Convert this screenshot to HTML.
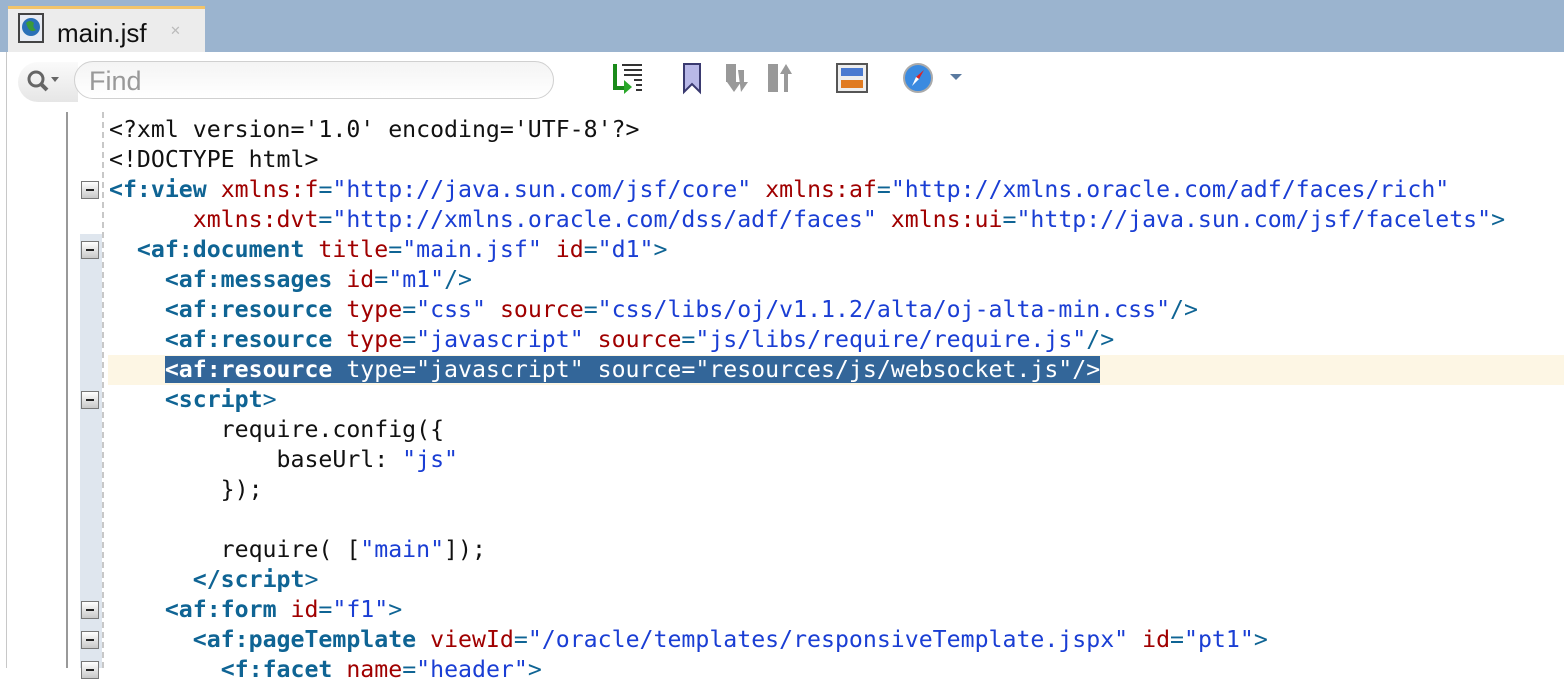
<!DOCTYPE html>
<html><head><style>
body{margin:0;width:1564px;height:668px;overflow:hidden;background:#fff;position:relative;font-family:"Liberation Sans",sans-serif}
.top{position:absolute;left:0;top:0;width:1564px;height:52px;background:#9bb4cf}
.tab{position:absolute;left:8px;top:6px;width:197px;height:46px;background:#ececec;border-top:3px solid #f2c46a;box-sizing:border-box}
.tab .nm{position:absolute;left:49px;top:9px;font-size:26px;color:#111}
.tab .x{position:absolute;left:162px;top:14px;color:#bbb;font-size:13px}
.main{position:absolute;left:6px;top:52px;width:1558px;height:616px;background:#fff;border-left:1px solid #c8c8c8}
.find{position:absolute;left:74px;top:61px;width:480px;height:38px;border:1px solid #d0d0d0;border-radius:20px;background:linear-gradient(#f4f4f4,#fff);box-sizing:border-box}
.find span{position:absolute;left:14px;top:4px;font-size:27px;color:#999}
.srch{position:absolute;left:18px;top:62px;width:60px;height:40px;border-radius:20px 0 0 20px;background:linear-gradient(#fafafa,#e6e6e6)}
.gline{position:absolute;left:66px;top:112px;width:2px;height:556px;background:#999}
.gband{position:absolute;left:80px;top:234px;width:22px;height:434px;background:#dfe6ee}
.dash{position:absolute;left:102px;top:112px;height:556px;border-left:2px dashed #c8c8c8}
.code{position:absolute;left:109px;top:115px;font-family:"DejaVu Sans Mono","Liberation Mono",monospace;font-size:23.2px;line-height:30px;white-space:pre;color:#111}
.l{height:30px}
.t{color:#0f6494;font-weight:bold}.tn{color:#0f6494}
.a{color:#a00000}.v{color:#1a3ed4}
.cur{position:absolute;left:108px;top:355px;width:1456px;height:30px;background:#fdf6e4}
.sel{background:#336699;color:#fff}
.sel *{color:#fff!important}
.fold{position:absolute;left:81px;width:18px;height:18px;border:1px solid #777;background:linear-gradient(#fff,#c8c8c8);box-sizing:border-box}
.fold:after{content:"";position:absolute;left:4px;top:7px;width:8px;height:2px;background:#222}
</style></head><body>
<div class="top"></div>
<div class="tab"><svg style="position:absolute;left:10px;top:4px" width="26" height="30"><rect x="1" y="1" width="24" height="28" fill="#e8ecf4" stroke="#444" stroke-width="2"/><circle cx="13" cy="14" r="9" fill="#2a70b8"/><path d="M8 10 q4-4 8 0 q-2 4 2 7 q-5 3-8-2z" fill="#3a9a3a"/></svg><span class="nm">main.jsf</span><span class="x">✕</span></div>
<div class="main"></div>
<div class="srch"><svg width="60" height="40"><circle cx="18" cy="17" r="7" fill="none" stroke="#666" stroke-width="3"/><line x1="23" y1="22" x2="29" y2="28" stroke="#666" stroke-width="4"/><path d="M33 15 l8 0 l-4 5z" fill="#666"/></svg></div>
<div class="find"><span>Find</span></div>
<svg style="position:absolute;left:612px;top:62px" width="360" height="34">
<path d="M3 2 v24 h12" fill="none" stroke="#1a8a1a" stroke-width="4"/><path d="M12 18 l8 7 l-8 7z" fill="#2aa82a"/><g fill="#333"><rect x="10" y="2" width="20" height="2"/><rect x="12" y="7" width="18" height="2"/><rect x="12" y="12" width="18" height="2"/><rect x="22" y="17" width="8" height="2"/><rect x="24" y="22" width="6" height="2"/><rect x="24" y="27" width="6" height="2"/></g>
<path d="M72 2 h16 v28 l-8-8 l-8 8z" fill="#b8b8e8" stroke="#3a3a70" stroke-width="2"/>
<path d="M114 2 h10 v18 h5 l-7 10 l-7-10 h-1z M126 8 h6 v12 h4 l-7 10z" fill="#999"/>
<path d="M156 2 h10 v28 h-10z M168 12 l6-10 l6 10 h-4 v18 h-4 v-18z" fill="#999"/>
<rect x="225" y="2" width="30" height="28" fill="#eee" stroke="#555" stroke-width="2"/><rect x="229" y="6" width="22" height="8" fill="#4a7ad0"/><rect x="229" y="18" width="22" height="8" fill="#e07a20"/>
<circle cx="306" cy="16" r="14" fill="#3a8ae0" stroke="#aaa" stroke-width="2"/><path d="M312 8 l-5 9 l-3-2z" fill="#e02020"/><path d="M300 24 l4-9 l3 2z" fill="#fff"/>
<path d="M338 12 h12 l-6 6z" fill="#5a7aa0"/>
</svg>
<div class="gline"></div>
<div class="gband"></div>
<div class="dash"></div>
<div class="cur"></div>
<div class="fold" style="top:181px"></div>
<div class="fold" style="top:241px"></div>
<div class="fold" style="top:391px"></div>
<div class="fold" style="top:601px"></div>
<div class="fold" style="top:631px"></div>
<div class="fold" style="top:661px"></div>
<div class="code"><div class="l">&lt;?xml version='1.0' encoding='UTF-8'?&gt;</div><div class="l">&lt;!DOCTYPE html&gt;</div><div class="l"><span class="t">&lt;f:view</span> <span class="a">xmlns:f</span><span class="tn">=</span><span class="v">"http://java.sun.com/jsf/core"</span> <span class="a">xmlns:af</span><span class="tn">=</span><span class="v">"http://xmlns.oracle.com/adf/faces/rich"</span></div><div class="l">      <span class="a">xmlns:dvt</span><span class="tn">=</span><span class="v">"http://xmlns.oracle.com/dss/adf/faces"</span> <span class="a">xmlns:ui</span><span class="tn">=</span><span class="v">"http://java.sun.com/jsf/facelets"</span><span class="tn">&gt;</span></div><div class="l">  <span class="t">&lt;af:document</span> <span class="a">title</span><span class="tn">=</span><span class="v">"main.jsf"</span> <span class="a">id</span><span class="tn">=</span><span class="v">"d1"</span><span class="tn">&gt;</span></div><div class="l">    <span class="t">&lt;af:messages</span> <span class="a">id</span><span class="tn">=</span><span class="v">"m1"</span><span class="tn">/&gt;</span></div><div class="l">    <span class="t">&lt;af:resource</span> <span class="a">type</span><span class="tn">=</span><span class="v">"css"</span> <span class="a">source</span><span class="tn">=</span><span class="v">"css/libs/oj/v1.1.2/alta/oj-alta-min.css"</span><span class="tn">/&gt;</span></div><div class="l">    <span class="t">&lt;af:resource</span> <span class="a">type</span><span class="tn">=</span><span class="v">"javascript"</span> <span class="a">source</span><span class="tn">=</span><span class="v">"js/libs/require/require.js"</span><span class="tn">/&gt;</span></div><div class="l">    <span class="sel"><span class="t">&lt;af:resource</span> type="javascript" source="resources/js/websocket.js"/&gt;</span></div><div class="l">    <span class="t">&lt;script</span><span class="tn">&gt;</span></div><div class="l">        require.config({</div><div class="l">            baseUrl: <span class="v">"js"</span></div><div class="l">        });</div><div class="l"> </div><div class="l">        require( [<span class="v">"main"</span>]);</div><div class="l">      <span class="t">&lt;/script</span><span class="tn">&gt;</span></div><div class="l">    <span class="t">&lt;af:form</span> <span class="a">id</span><span class="tn">=</span><span class="v">"f1"</span><span class="tn">&gt;</span></div><div class="l">      <span class="t">&lt;af:pageTemplate</span> <span class="a">viewId</span><span class="tn">=</span><span class="v">"/oracle/templates/responsiveTemplate.jspx"</span> <span class="a">id</span><span class="tn">=</span><span class="v">"pt1"</span><span class="tn">&gt;</span></div><div class="l">        <span class="t">&lt;f:facet</span> <span class="a">name</span><span class="tn">=</span><span class="v">"header"</span><span class="tn">&gt;</span></div></div>
</body></html>
